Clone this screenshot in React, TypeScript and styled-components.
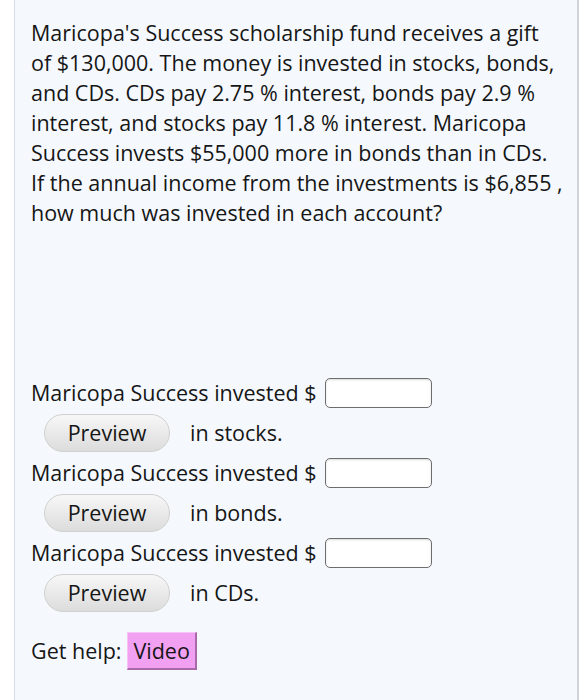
import React from 'react';
import styled, { createGlobalStyle } from 'styled-components';

const Global = createGlobalStyle`
  html, body {
    margin: 0;
    padding: 0;
    background: #ffffff;
  }
  body {
    font-family: "Open Sans", "Noto Sans", sans-serif;
    color: #161616;
  }
`;

const Panel = styled.div`
  margin-left: 14px;
  width: 565px;
  height: 700px;
  box-sizing: border-box;
  background: #f5f9fe;
  border-left: 1px solid #d3dbe4;
  border-right: 2px solid #cfd4da;
  padding: 18px 0 0 16px;
  font-size: 21.5px;
  line-height: 30px;
`;

const Question = styled.p`
  margin: 0 0 146px 0;
  width: 533px;
`;

const Amount = styled.span`
  white-space: nowrap;
`;

const PromptRow = styled.div`
  display: flex;
  align-items: center;
  height: 37px;
`;

const AnswerBox = styled.input`
  margin-left: 8px;
  width: 107px;
  height: 30px;
  box-sizing: border-box;
  border: 1px solid #6e6e6e;
  border-radius: 5px;
  background: #ffffff;
  box-shadow: inset 0 1px 2px rgba(0, 0, 0, 0.15);
`;

const ButtonRow = styled.div`
  display: flex;
  align-items: center;
  height: 43px;
  padding-left: 13px;
`;

const PreviewButton = styled.button`
  font-family: inherit;
  font-size: 21.5px;
  color: #161616;
  height: 38px;
  width: 126px;
  border: 1px solid #d0d0d0;
  border-radius: 19px;
  background: linear-gradient(#f7f7f7, #dcdcdc);
  padding: 0;
  margin-right: 20px;
`;

const HelpRow = styled.div`
  display: flex;
  align-items: center;
  margin-top: 18px;
  height: 38px;
`;

const VideoButton = styled.span`
  display: inline-flex;
  align-items: center;
  margin-left: 6px;
  height: 38px;
  box-sizing: border-box;
  padding: 0 5px 0 5px;
  background: #f2a0f2;
  border-right: 2px solid #a86aa8;
  border-bottom: 2px solid #a86aa8;
  border-top: 1px solid #f7c4f7;
  border-left: 1px solid #f7c4f7;
  color: #161616;
`;

const accounts = ['stocks', 'bonds', 'CDs'];

function App() {
  return (
    <>
      <Global />
      <Panel>
        <Question>
          Maricopa's Success scholarship fund receives a gift of $130,000. The money is invested
          in stocks, bonds, and CDs. CDs pay 2.75 % interest, bonds pay 2.9 % interest, and stocks
          pay 11.8 % interest. Maricopa Success invests $55,000 more in bonds than in CDs. If the
          annual income from the investments is <Amount>$6,855 ,</Amount> how much was invested
          in each account?
        </Question>
        {accounts.map((a) => (
          <React.Fragment key={a}>
            <PromptRow>
              Maricopa Success invested $<AnswerBox type='text' />
            </PromptRow>
            <ButtonRow>
              <PreviewButton>Preview</PreviewButton>
              in {a}.
            </ButtonRow>
          </React.Fragment>
        ))}
        <HelpRow>
          Get help:<VideoButton>Video</VideoButton>
        </HelpRow>
      </Panel>
    </>
  );
}

export default App;
